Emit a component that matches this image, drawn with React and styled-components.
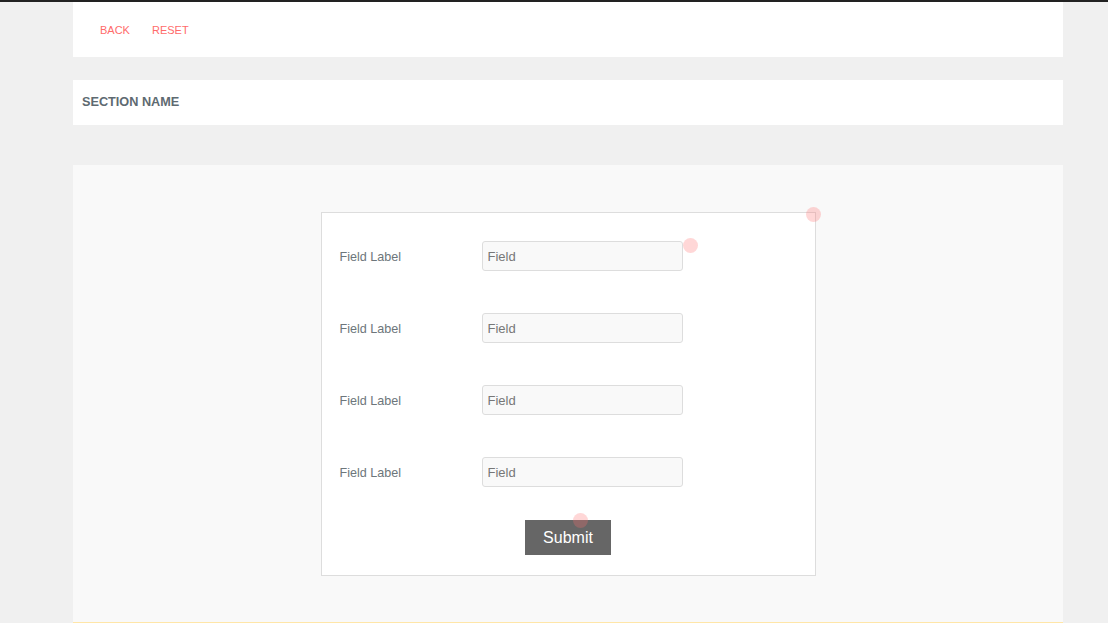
import React from "react";
import styled, { createGlobalStyle } from "styled-components";

const Global = createGlobalStyle`
  html, body { margin: 0; padding: 0; }
  body {
    background: #f0f0f0;
    border-top: 2px solid #222;
    font-family: "Liberation Sans", Arial, sans-serif;
    min-height: 621px;
  }
  * { box-sizing: border-box; }
`;

const Page = styled.div`
  width: 990px;
  margin-left: 73px;
  display: flex;
  flex-direction: column;
`;

const Header = styled.div`
  height: 55px;
  background: #fff;
  display: flex;
  align-items: center;
  gap: 22px;
  padding-left: 27px;
`;

const NavLink = styled.a`
  color: #ff6b6b;
  font-size: 11px;
  text-transform: uppercase;
  text-decoration: none;
  cursor: pointer;
`;

const SectionBar = styled.div`
  margin-top: 23px;
  height: 45px;
  background: #fff;
  display: flex;
  align-items: center;
  padding: 0 0 1px 9px;
  color: #5e6a71;
  font-size: 12.7px;
  font-weight: bold;
`;

const Panel = styled.div`
  margin-top: 40px;
  background: #f9f9f9;
  border-bottom: 2px solid #ffe6a8;
  padding: 47px 0 46px;
  display: flex;
  justify-content: center;
`;

const FormBox = styled.form`
  position: relative;
  width: 495px;
  background: #fff;
  border: 1px solid #ddd;
  padding: 28px 18px 20px;
  display: flex;
  flex-direction: column;
  gap: 42px;
`;

const Row = styled.div`
  display: grid;
  grid-template-columns: 142px 201px;
  align-items: center;
`;

const Label = styled.label`
  color: #6d767b;
  font-size: 12.6px;
  padding-top: 2px;
`;

const Input = styled.input`
  height: 30px;
  width: 201px;
  border: 1px solid #ddd;
  border-radius: 3px;
  background: #f9f9f9;
  padding: 0 5px;
  font-family: "Liberation Sans", Arial, sans-serif;
  font-size: 13px;
  color: #333;
  &::placeholder { color: #777; }
`;

const Actions = styled.div`
  display: flex;
  justify-content: center;
  margin-top: -9px;
`;

const Submit = styled.button`
  width: 86px;
  height: 35px;
  padding: 0;
  background: #666;
  color: #fff;
  border: none;
  font-family: "Liberation Sans", Arial, sans-serif;
  font-size: 16px;
  cursor: pointer;
`;

const Dot = styled.span`
  position: absolute;
  width: 15px;
  height: 15px;
  border-radius: 50%;
  background: rgba(255, 110, 110, 0.28);
  pointer-events: none;
`;

export default function App() {
  const fields = [0, 1, 2, 3];
  return (
    <>
      <Global />
      <Page>
        <Header>
          <NavLink>Back</NavLink>
          <NavLink>Reset</NavLink>
        </Header>
        <SectionBar>SECTION NAME</SectionBar>
        <Panel>
          <FormBox onSubmit={(e) => e.preventDefault()}>
            {fields.map((i) => (
              <Row key={i}>
                <Label>Field Label</Label>
                <Input placeholder="Field" />
              </Row>
            ))}
            <Actions>
              <Submit type="submit">Submit</Submit>
            </Actions>
            <Dot style={{ left: 484, top: -6 }} />
            <Dot style={{ left: 361, top: 25 }} />
            <Dot style={{ left: 251, top: 300 }} />
          </FormBox>
        </Panel>
      </Page>
    </>
  );
}
